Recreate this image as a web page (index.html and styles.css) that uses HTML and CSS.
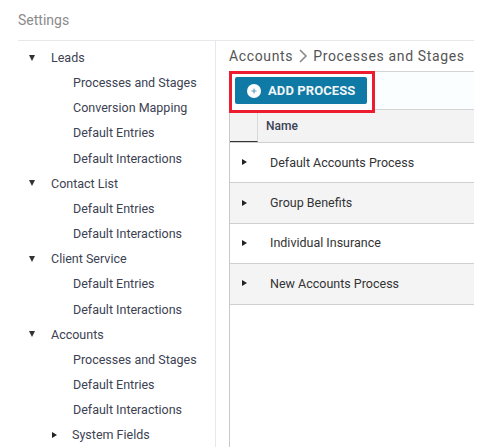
FILE: index.html
```html
<!DOCTYPE html>
<html lang="en">
<head>
    <meta charset="UTF-8">
    <meta name="viewport" content="width=device-width, initial-scale=1.0">
    <title>Settings</title>
    <link rel="stylesheet" href="styles.css">
</head>
<body>
    <div class="page">
        <h1 class="page-title">Settings</h1>
        <div class="layout">
            <div class="sidebar">
                <div class="tree-item"><span class="arrow-down"></span>Leads</div>
                <div class="tree-leaf">Processes and Stages</div>
                <div class="tree-leaf">Conversion Mapping</div>
                <div class="tree-leaf">Default Entries</div>
                <div class="tree-leaf">Default Interactions</div>
                <div class="tree-item"><span class="arrow-down"></span>Contact List</div>
                <div class="tree-leaf">Default Entries</div>
                <div class="tree-leaf">Default Interactions</div>
                <div class="tree-item"><span class="arrow-down"></span>Client Service</div>
                <div class="tree-leaf">Default Entries</div>
                <div class="tree-leaf">Default Interactions</div>
                <div class="tree-item"><span class="arrow-down"></span>Accounts</div>
                <div class="tree-leaf">Processes and Stages</div>
                <div class="tree-leaf">Default Entries</div>
                <div class="tree-leaf">Default Interactions</div>
                <div class="tree-sub"><span class="arrow-right"></span>System Fields</div>
            </div>
            <div class="content">
                <div class="breadcrumb">
                    <span>Accounts</span>
                    <svg class="crumb-sep" width="10" height="14" viewBox="0 0 10 14"><path d="M2 1 L8 7 L2 13" fill="none" stroke="#8a8a8a" stroke-width="1.6"/></svg>
                    <span>Processes and Stages</span>
                </div>
                <div class="panel">
                    <div class="toolbar">
                        <div class="highlight">
                            <button class="add-btn">
                                <svg width="14" height="14" viewBox="0 0 14 14"><circle cx="7" cy="7" r="7" fill="#fff"/><path d="M7 4.5 V9.5 M4.5 7 H9.5" stroke="#5a9fbd" stroke-width="1.1"/></svg>
                                ADD PROCESS
                            </button>
                        </div>
                    </div>
                    <div class="table-head">
                        <div class="head-blank"></div>
                        <div class="head-name">Name</div>
                    </div>
                    <div class="row"><span class="arrow-right"></span>Default Accounts Process</div>
                    <div class="row alt"><span class="arrow-right"></span>Group Benefits</div>
                    <div class="row"><span class="arrow-right"></span>Individual Insurance</div>
                    <div class="row alt"><span class="arrow-right"></span>New Accounts Process</div>
                </div>
            </div>
        </div>
    </div>
</body>
</html>
```

FILE: styles.css
```css
html, body {
    height: 100%;
}

body {
    margin: 0;
    background: #fff;
    font-family: 'Roboto', sans-serif;
    color: #3c4252;
    overflow: hidden;
}

.page {
    padding-left: 18px;
    width: 456px;
}

.page-title {
    margin: 0;
    height: 40px;
    line-height: 41px;
    font-size: 14px;
    font-weight: 400;
    color: #8b8b8b;
    border-bottom: 1px solid #e6e8eb;
}

.layout {
    display: flex;
    height: 406px;
}

.sidebar {
    width: 197px;
    border-right: 1px solid #e6e8eb;
    font-size: 12.5px;
    flex-shrink: 0;
    padding-top: 4px;
}

.tree-item,
.tree-leaf,
.tree-sub {
    height: 25.17px;
    line-height: 25px;
    white-space: nowrap;
}

.tree-item {
    display: flex;
    align-items: center;
    padding-left: 11px;
}

.tree-item .arrow-down {
    margin-right: 16px;
}

.tree-leaf {
    padding-left: 55px;
}

.tree-sub {
    display: flex;
    align-items: center;
    padding-left: 34px;
}

.tree-sub .arrow-right {
    margin-right: 15px;
}

.arrow-down {
    width: 0;
    height: 0;
    border-left: 3.5px solid transparent;
    border-right: 3.5px solid transparent;
    border-top: 6px solid #333;
    flex-shrink: 0;
}

.arrow-right {
    width: 0;
    height: 0;
    border-top: 3px solid transparent;
    border-bottom: 3px solid transparent;
    border-left: 5px solid #222;
    flex-shrink: 0;
}

.content {
    flex: 1;
    padding-left: 13px;
    min-width: 0;
}

.breadcrumb {
    display: flex;
    align-items: center;
    gap: 5px;
    height: 30px;
    font-size: 14px;
    letter-spacing: 0.65px;
    color: #555;
    white-space: nowrap;
}

.panel {
    border-left: 1px solid #c9c9c9;
    height: 376px;
}

.toolbar {
    background: #fbfeff;
    border-top: 1px solid #d4d4d4;
    border-bottom: 1px solid #d4d4d4;
    height: 37px;
    position: relative;
}

.highlight {
    position: absolute;
    left: -1px;
    top: -1px;
    width: 146px;
    height: 42px;
    box-sizing: border-box;
    background: #fff;
    border: 3px solid #ed1c2e;
    padding: 3px;
}

.add-btn {
    display: flex;
    align-items: center;
    gap: 7px;
    width: 132px;
    height: 27px;
    padding: 0 0 0 12px;
    background: #0f7aa5;
    color: #f2f6f8;
    border: none;
    border-radius: 2px;
    font-family: 'Roboto', sans-serif;
    font-size: 13px;
    font-weight: 700;
    letter-spacing: 0.1px;
}

.table-head {
    display: flex;
    height: 32px;
    background: #f3f3f3;
    border-bottom: 1px solid #d0d0d0;
    font-size: 12px;
    font-weight: 500;
}

.head-blank {
    width: 28px;
    height: 32px;
    box-sizing: border-box;
    border-right: 1px solid #d8d8d8;
    border-bottom: 1px solid #333;
}

.head-name {
    padding-left: 8px;
    line-height: 32px;
    color: #3c4252;
}

.row {
    display: flex;
    align-items: center;
    height: 38.4px;
    padding: 0 0 1px 12px;
    font-size: 12.5px;
    color: #333;
    background: #fff;
    border-bottom: 1px solid #d0d0d0;
}

.row .arrow-right {
    margin-right: 23px;
}

.row.alt {
    background: #f4f4f4;
}
```
